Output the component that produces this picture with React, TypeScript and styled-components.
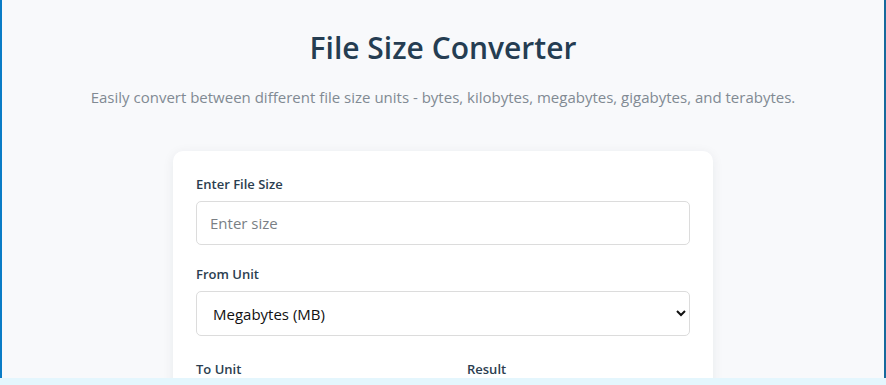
import React, { useState } from 'react'
import styled, { createGlobalStyle } from 'styled-components'

const GlobalStyle = createGlobalStyle`
  html, body {
    margin: 0;
    padding: 0;
    background: #e4f6fd;
  }
  * {
    box-sizing: border-box;
  }
`

const Frame = styled.div`
  height: 378px;
  overflow: hidden;
  background: #f8f9fb;
  border-left: 2px solid #0a7cc6;
  border-right: 2px solid #17699c;
  font-family: 'Open Sans', 'Noto Sans', sans-serif;
`

const Page = styled.main`
  display: flex;
  flex-direction: column;
  align-items: center;
  padding-top: 28px;
`

const Title = styled.h1`
  margin: 0;
  font-size: 30px;
  line-height: 40px;
  font-weight: 600;
  color: #253d52;
`

const Subtitle = styled.p`
  margin: 18px 0 0;
  font-size: 15px;
  line-height: 22px;
  color: #818a93;
`

const Card = styled.section`
  width: 540px;
  margin-top: 43px;
  padding: 24px 23px;
  background: #fff;
  border-radius: 10px;
  box-shadow: 0 2px 12px rgba(30, 40, 60, 0.07);
  display: flex;
  flex-direction: column;
  gap: 20px;
`

const Field = styled.div`
  display: flex;
  flex-direction: column;
  gap: 8px;
  min-width: 0;
`

const Row = styled.div`
  display: grid;
  grid-template-columns: 1fr 1fr;
  column-gap: 48px;
  margin-top: 4px;
`

const Label = styled.label`
  font-size: 13px;
  line-height: 18px;
  font-weight: 600;
  color: #2b3e50;
`

const Input = styled.input`
  height: 44px;
  padding: 0 13px;
  border: 1px solid #dcdcdc;
  border-radius: 5px;
  font-family: inherit;
  font-size: 15px;
  color: #222;
  outline: none;
  &::placeholder {
    color: #7a7f85;
  }
`

const Select = styled.select`
  height: 45px;
  padding: 0 12px;
  border: 1px solid #dcdcdc;
  border-radius: 5px;
  background: #fff;
  font-family: inherit;
  font-size: 15px;
  color: #111;
  outline: none;
`

const units = [
  'Bytes (B)',
  'Kilobytes (KB)',
  'Megabytes (MB)',
  'Gigabytes (GB)',
  'Terabytes (TB)',
]

export default function App() {
  const [size, setSize] = useState('')
  const [from, setFrom] = useState('Megabytes (MB)')
  const [to, setTo] = useState('Gigabytes (GB)')

  return (
    <>
      <GlobalStyle />
      <Frame>
        <Page>
          <Title>File Size Converter</Title>
          <Subtitle>
            Easily convert between different file size units - bytes, kilobytes, megabytes, gigabytes, and terabytes.
          </Subtitle>
          <Card>
            <Field>
              <Label htmlFor="size">Enter File Size</Label>
              <Input
                id="size"
                placeholder="Enter size"
                value={size}
                onChange={e => setSize(e.target.value)}
              />
            </Field>
            <Field>
              <Label htmlFor="from">From Unit</Label>
              <Select id="from" value={from} onChange={e => setFrom(e.target.value)}>
                {units.map(u => (
                  <option key={u}>{u}</option>
                ))}
              </Select>
            </Field>
            <Row>
              <Field>
                <Label htmlFor="to">To Unit</Label>
                <Select id="to" value={to} onChange={e => setTo(e.target.value)}>
                  {units.map(u => (
                    <option key={u}>{u}</option>
                  ))}
                </Select>
              </Field>
              <Field>
                <Label>Result</Label>
                <Input readOnly value="" />
              </Field>
            </Row>
          </Card>
        </Page>
      </Frame>
    </>
  )
}
